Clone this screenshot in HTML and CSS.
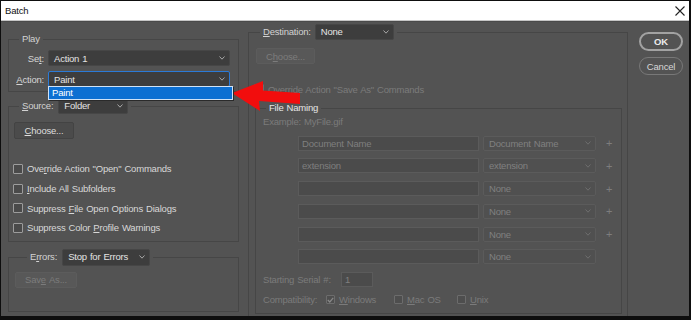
FILE: index.html
```html
<!DOCTYPE html>
<html>
<head>
<meta charset="utf-8">
<title>Batch</title>
<link rel="stylesheet" href="styles.css">
</head>
<body>
<div class="window">
  <div class="titlebar">
    <span class="title">Batch</span>
    <svg class="close" width="10" height="10" viewBox="0 0 10 10"><path d="M0.5 0.5 L9.5 9.5 M9.5 0.5 L0.5 9.5" stroke="#222" stroke-width="1.1" fill="none"/></svg>
  </div>
  <div class="content">
    <div class="col-left">
      <fieldset class="group play">
        <legend>Play</legend>
        <div class="form-row">
          <span class="lbl">Se<u>t</u>:</span>
          <div class="select wide"><span>Action 1</span><svg class="chev" width="6" height="4" viewBox="0 0 6 4"><polyline points="0.5,0.5 3,3.2 5.5,0.5" fill="none" stroke="#a8a8a8" stroke-width="1"/></svg></div>
        </div>
        <div class="form-row">
          <span class="lbl"><u>A</u>ction:</span>
          <div class="select wide focus"><span>Paint</span><svg class="chev" width="6" height="4" viewBox="0 0 6 4"><polyline points="0.5,0.5 3,3.2 5.5,0.5" fill="none" stroke="#a8a8a8" stroke-width="1"/></svg>
            <div class="droplist">Paint</div>
          </div>
        </div>
      </fieldset>

      <fieldset class="group source">
        <legend><span class="legend-in"><span><u>S</u>ource:</span><span class="select src"><span>Folder</span><svg class="chev" width="6" height="4" viewBox="0 0 6 4"><polyline points="0.5,0.5 3,3.2 5.5,0.5" fill="none" stroke="#a8a8a8" stroke-width="1"/></svg></span></span></legend>
        <div class="src-body">
          <div class="btn choose"><u>C</u>hoose...</div>
          <div class="checks">
            <div class="check"><span class="box"></span><span>Ove<u>r</u>ride Action "Open" Commands</span></div>
            <div class="check"><span class="box"></span><span><u>I</u>nclude All Subfolders</span></div>
            <div class="check"><span class="box"></span><span>Suppress <u>F</u>ile Open Options Dialogs</span></div>
            <div class="check"><span class="box"></span><span>Suppress Color <u>P</u>rofile Warnings</span></div>
          </div>
        </div>
      </fieldset>

      <fieldset class="group errors">
        <legend><span class="legend-in"><span>E<u>r</u>rors:</span><span class="select err"><span>Stop for Errors</span><svg class="chev" width="6" height="4" viewBox="0 0 6 4"><polyline points="0.5,0.5 3,3.2 5.5,0.5" fill="none" stroke="#a8a8a8" stroke-width="1"/></svg></span></span></legend>
        <div class="err-body">
          <div class="btn disabled saveas">Sav<u>e</u>&nbsp;As...</div>
        </div>
      </fieldset>
    </div>

    <div class="col-right">
      <fieldset class="group dest">
        <legend><span class="legend-in"><span><u>D</u>estination:</span><span class="select dsel"><span>None</span><svg class="chev" width="6" height="4" viewBox="0 0 6 4"><polyline points="0.5,0.5 3,3.2 5.5,0.5" fill="none" stroke="#a8a8a8" stroke-width="1"/></svg></span></span></legend>
        <div class="dest-body">
          <div class="btn disabled dchoose">C<u>h</u>oose...</div>
          <div class="override dim"><span class="box dbox"></span><span>Override Action "Save As" Commands</span></div>
          <fieldset class="group naming">
            <legend>File Naming</legend>
            <div class="example dim">Example: MyFile.gif</div>
            <div class="name-grid">
              <div class="field">Document Name</div>
              <div class="dsel2"><span>Document Name</span><svg class="chev" width="6" height="4" viewBox="0 0 6 4"><polyline points="0.5,0.5 3,3.2 5.5,0.5" fill="none" stroke="#6e6e6e" stroke-width="1"/></svg></div>
              <div class="plus">+</div>

              <div class="field">extension</div>
              <div class="dsel2"><span>extension</span><svg class="chev" width="6" height="4" viewBox="0 0 6 4"><polyline points="0.5,0.5 3,3.2 5.5,0.5" fill="none" stroke="#6e6e6e" stroke-width="1"/></svg></div>
              <div class="plus">+</div>

              <div class="field"></div>
              <div class="dsel2"><span>None</span><svg class="chev" width="6" height="4" viewBox="0 0 6 4"><polyline points="0.5,0.5 3,3.2 5.5,0.5" fill="none" stroke="#6e6e6e" stroke-width="1"/></svg></div>
              <div class="plus">+</div>

              <div class="field"></div>
              <div class="dsel2"><span>None</span><svg class="chev" width="6" height="4" viewBox="0 0 6 4"><polyline points="0.5,0.5 3,3.2 5.5,0.5" fill="none" stroke="#6e6e6e" stroke-width="1"/></svg></div>
              <div class="plus">+</div>

              <div class="field"></div>
              <div class="dsel2"><span>None</span><svg class="chev" width="6" height="4" viewBox="0 0 6 4"><polyline points="0.5,0.5 3,3.2 5.5,0.5" fill="none" stroke="#6e6e6e" stroke-width="1"/></svg></div>
              <div class="plus">+</div>

              <div class="field"></div>
              <div class="dsel2"><span>None</span><svg class="chev" width="6" height="4" viewBox="0 0 6 4"><polyline points="0.5,0.5 3,3.2 5.5,0.5" fill="none" stroke="#6e6e6e" stroke-width="1"/></svg></div>
              <div class="plus"></div>
            </div>
            <div class="serial dim"><span class="serial-lbl">Starting Serial #:</span><span class="field small">1</span></div>
            <div class="compat dim">
              <span class="compat-lbl">Compatibility:</span>
              <span class="opt o1"><span class="box dbox checked"><svg width="7" height="6" viewBox="0 0 7 6"><polyline points="0.8,3 2.8,5 6.2,0.8" fill="none" stroke="#8a8a8a" stroke-width="1.2"/></svg></span><span><u>W</u>indows</span></span>
              <span class="opt o2"><span class="box dbox"></span><span><u>M</u>ac OS</span></span>
              <span class="opt"><span class="box dbox"></span><span><u>U</u>nix</span></span>
            </div>
          </fieldset>
        </div>
      </fieldset>
    </div>

    <div class="col-buttons">
      <div class="pill ok">OK</div>
      <div class="pill cancel">Cancel</div>
    </div>
  </div>
</div>
<svg class="arrow" width="76" height="38" viewBox="0 0 76 38"><polygon points="4,17 35,5 35,14.5 72,17 72,28 31,25 32,35" fill="#f20d0d"/></svg>
</body>
</html>
```

FILE: styles.css
```css
* { box-sizing: border-box; }
html, body { margin: 0; padding: 0; }
body {
  width: 691px;
  height: 320px;
  background: #0e0e0e;
  overflow: hidden;
  position: relative;
  font-family: "Liberation Sans", Arial, sans-serif;
  font-size: 9.5px;
  letter-spacing: -0.2px;
  word-spacing: 0.6px;
  color: #d8d8d8;
}
u { text-decoration: underline; text-underline-offset: 1px; }

.window {
  margin: 1px 0 0 1px;
  width: 688px;
  height: 315px;
  background: #535353;
  display: flex;
  flex-direction: column;
  overflow: hidden;
}
.titlebar {
  flex: none;
  height: 20px;
  background: #ffffff;
  border-bottom: 1px solid #c6c6c6;
  display: flex;
  align-items: center;
  justify-content: space-between;
  padding: 0 4px 0 4px;
  color: #111;
}
.title { font-size: 9.5px; }
.content {
  flex: 1;
  min-height: 0;
  display: flex;
  align-items: flex-start;
  padding-left: 7px;
  border-top: 1px solid #4a4a4a;
}

/* group boxes */
.group {
  margin: 0;
  padding: 0;
  border: 1px solid #464646;
  min-width: 0;
}
.group > legend {
  padding: 0 3px;
  margin-left: 10px;
  line-height: 12px;
  color: #d2d2d2;
}
.legend-in { display: inline-flex; align-items: center; gap: 5px; }

.col-left { width: 231px; flex: none; display: flex; flex-direction: column; }

.play { margin-top: 11px; padding: 5px 0 4px 0; }
.form-row { display: flex; align-items: center; height: 16px; }
.form-row + .form-row { margin-top: 5px; }
.lbl { width: 35px; text-align: right; margin-right: 4px; color: #d6d6d6; }

.select {
  position: relative;
  height: 16px;
  background: #3d3d3d;
  border: 1px solid #464646;
  border-radius: 2px;
  padding: 0 4px 0 5px;
  display: flex;
  align-items: center;
  justify-content: space-between;
  color: #e4e4e4;
}
.select.wide { width: 182px; }
.select.focus { border-color: #2b7ad6; }
.chev { flex: none; }
.droplist {
  position: absolute;
  left: -1px;
  top: 14px;
  width: 185px;
  height: 14px;
  background: #0c6fd2;
  border: 1px solid #cfe2f7;
  box-shadow: 1px 1px 0 #2a2a2a;
  color: #fff;
  padding-left: 3px;
  line-height: 12px;
  z-index: 2;
}

.source { margin-top: 6px; padding: 0 0 3px 0; }
.src { width: 70px; }
.src-body { padding-left: 5px; }
.btn {
  display: flex;
  align-items: center;
  justify-content: center;
  height: 17px;
  background: #4b4b4b;
  border: 1px solid #434343;
  border-radius: 2px;
  color: #dedede;
}
.choose { width: 60px; margin-top: 8px; }
.checks { margin-top: 20px; }
.check { display: flex; align-items: center; height: 19.7px; margin-left: -1px; }
.box {
  flex: none;
  width: 10px;
  height: 10px;
  border: 1px solid #9c9c9c;
  border-radius: 1px;
  background: #4a4a4a;
  margin-right: 4px;
  display: flex;
  align-items: center;
  justify-content: center;
}

.errors { margin-top: 7px; padding: 0 0 23px 0; }
.errors > legend { margin-left: 18px; }
.err { width: 88px; height: 17px; }
.err-body { padding-left: 6px; }
.btn.disabled {
  background: #585858;
  border-color: #5c5c5c;
  color: #7c7c7c;
}
.saveas { width: 62px; height: 16px; margin-top: 6px; }

/* right column */
.col-right { width: 380px; flex: none; margin-left: 9px; }
.dest { margin-top: 2px; padding: 0 0 12px 0; }
.dest > legend { margin-left: 11px; }
.dest .legend-in { gap: 4px; }
.dsel { width: 79px; }
.dchoose { width: 59px; height: 16px; margin: 8px 0 0 7px; }
.dim { color: #7b7b7b; }
.override { display: flex; align-items: center; height: 12px; margin: 19px 0 0 5px; }
.dbox { border-color: #6c6c6c; background: #4e4e4e; }

.naming { margin: 7px 0 0 6px; width: 367px; padding: 0 0 7px 0; }
.naming > legend { color: #e6e6e6; }
.example { padding-left: 7px; margin-top: 2px; line-height: 12px; }
.name-grid {
  margin: 7.5px 0 0 42px;
  display: grid;
  grid-template-columns: 181px 113px 20px;
  column-gap: 4px;
  row-gap: 7.8px;
  grid-auto-rows: 15px;
}
.field {
  background: #4b4b4b;
  border: 1px solid #5b5b5b;
  color: #7f7f7f;
  padding-left: 3px;
  display: flex;
  align-items: center;
}
.dsel2 {
  background: #505050;
  border: 1px solid #5b5b5b;
  border-radius: 2px;
  color: #808080;
  padding: 0 4px 0 5px;
  display: flex;
  align-items: center;
  justify-content: space-between;
}
.plus {
  color: #7d7d7d;
  font-size: 11px;
  display: flex;
  align-items: center;
  justify-content: center;
  margin-left: -2px;
}
.serial { display: flex; align-items: center; margin: 7.5px 0 0 7px; height: 15px; }
.serial-lbl { width: 78px; }
.field.small { width: 32px; height: 15px; }
.compat { display: flex; align-items: center; margin: 7px 0 0 7px; height: 12px; }
.compat-lbl { width: 63px; }
.opt { display: flex; align-items: center; }
.opt .box { width: 9px; height: 9px; }
.opt.o1 { width: 68px; }
.opt.o2 { width: 63px; }

/* buttons */
.col-buttons {
  width: 44px;
  flex: none;
  margin-left: 11px;
  margin-top: 10px;
  display: flex;
  flex-direction: column;
  gap: 6px;
}
.pill {
  display: flex;
  align-items: center;
  justify-content: center;
  border-radius: 10px;
}
.ok { height: 19px; border: 2px solid #a2a2a2; color: #ececec; font-weight: bold; }
.cancel { height: 18px; border: 1.5px solid #787878; color: #d6d6d6; }

.arrow { position: absolute; left: 228px; top: 76px; }
```
